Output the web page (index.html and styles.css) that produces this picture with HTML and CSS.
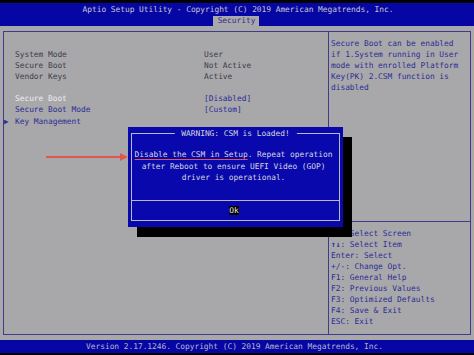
FILE: index.html
```html
<!DOCTYPE html>
<html>
<head>
<meta charset="utf-8">
<link rel="stylesheet" href="styles.css">
</head>
<body>
<div class="screen">
  <header class="top">
    <div class="title">Aptio Setup Utility - Copyright (C) 2019 American Megatrends, Inc.</div>
    <div class="tabs"><span class="tab">Security</span></div>
  </header>
  <main class="body">
    <div class="frame">
      <section class="left">
        <div class="row dim"><span class="mk"></span><span class="lbl">System Mode</span><span>User</span></div>
        <div class="row dim"><span class="mk"></span><span class="lbl">Secure Boot</span><span>Not Active</span></div>
        <div class="row dim"><span class="mk"></span><span class="lbl">Vendor Keys</span><span>Active</span></div>
        <div class="row blank"></div>
        <div class="row"><span class="mk"></span><span class="lbl sel">Secure Boot</span><span>[Disabled]</span></div>
        <div class="row"><span class="mk"></span><span class="lbl">Secure Boot Mode</span><span>[Custom]</span></div>
        <div class="row"><span class="mk">&#9654;</span><span class="lbl">Key Management</span><span></span></div>
      </section>
      <aside class="right">
        <div class="help">Secure Boot can be enabled<br>if 1.System running in User<br>mode with enrolled Platform<br>Key(PK) 2.CSM function is<br>disabled</div>
        <div class="keys">
          <div>&#8594;&#8592;: Select Screen</div>
          <div><b>&#8593;&#8595;</b>: Select Item</div>
          <div>Enter: Select</div>
          <div>+/-: Change Opt.</div>
          <div>F1: General Help</div>
          <div>F2: Previous Values</div>
          <div>F3: Optimized Defaults</div>
          <div>F4: Save &amp; Exit</div>
          <div>ESC: Exit</div>
        </div>
      </aside>
    </div>
  </main>
  <footer class="bottom">Version 2.17.1246. Copyright (C) 2019 American Megatrends, Inc.</footer>

  <div class="dialog">
    <div class="inner">
      <div class="dtitle">WARNING: CSM is Loaded!</div>
      <div class="msg"><span class="mark">Disable the CSM in Setup</span>. Repeat operation<br>after Reboot to ensure UEFI Video (GOP)<br>driver is operational.</div>
      <div class="actions"><span class="ok">Ok</span></div>
    </div>
  </div>

  <svg class="arrow" width="84" height="10" viewBox="0 0 84 10">
    <line x1="0" y1="5" x2="76" y2="5" stroke="#e2574c" stroke-width="2.2"/>
    <polygon points="74,1 82,5 74,9" fill="#e2574c"/>
  </svg>
</div>
</body>
</html>
```

FILE: styles.css
```css
html, body {
  margin: 0;
  padding: 0;
  background: #000;
}
.screen {
  position: relative;
  width: 474px;
  height: 355px;
  padding-top: 3px;
  box-sizing: border-box;
  display: flex;
  flex-direction: column;
  font-family: "DejaVu Sans Mono", "Liberation Mono", monospace;
  font-size: 7.9px;
  letter-spacing: -0.04px;
  overflow: hidden;
}
.top {
  height: 23px;
  background: #0606a4;
  padding-top: 1px;
  box-sizing: border-box;
  display: flex;
  flex-direction: column;
  align-items: center;
}
.title {
  height: 10px;
  line-height: 11px;
  color: #c6c6cc;
  padding-left: 2px;
}
.tabs {
  margin-top: 2px;
  display: flex;
  justify-content: center;
  width: 100%;
}
.tab {
  margin-left: -2px;
  height: 10px;
  line-height: 10px;
  padding: 0 4px 0 5px;
  background: #a9a9ab;
  color: #2e2e8e;
}
.body {
  height: 314px;
  background: #a8a8aa;
  padding: 5px 3px 5px 3px;
  box-sizing: border-box;
}
.frame {
  height: 304px;
  box-sizing: border-box;
  border: 1px solid #3c3c8a;
  display: grid;
  grid-template-columns: 325px 1fr;
}
.left {
  padding-top: 16.5px;
  border-right: 1px solid #3c3c8a;
}
.row {
  display: grid;
  grid-template-columns: 11px 189px auto;
  height: 11.2px;
  line-height: 11.2px;
  color: #2c2c96;
  white-space: pre;
}
.row.dim { color: #3c3c48; }
.mk {
  font-size: 7.5px;
  padding-left: 0;
}
.sel { color: #ececf2; }
.right {
  display: flex;
  flex-direction: column;
  color: #2c2c96;
}
.help {
  height: 190px;
  box-sizing: border-box;
  border-bottom: 1px solid #3c3c8a;
  padding: 6px 0 0 2px;
  line-height: 11px;
}
.keys {
  padding: 6px 0 0 2px;
  line-height: 11px;
}
.bottom {
  height: 13px;
  line-height: 13px;
  background: #0606a4;
  color: #b8b8c4;
  text-align: center;
  padding-right: 5px;
}
.dialog {
  position: absolute;
  left: 128px;
  top: 127px;
  width: 215px;
  height: 100px;
  box-sizing: border-box;
  background: #0808ac;
  padding: 6px 3px 6px 3px;
  box-shadow: 9px 10px 0 #000;
  color: #d6d6dc;
}
.inner {
  position: relative;
  height: 88px;
  box-sizing: border-box;
  border: 1px solid #b8b8d0;
  display: flex;
  flex-direction: column;
}
.dtitle {
  position: absolute;
  top: -6px;
  left: 50%;
  transform: translateX(-50%);
  background: #0808ac;
  padding: 0 7px;
  line-height: 11px;
  white-space: pre;
}
.msg {
  height: 67px;
  box-sizing: border-box;
  border-bottom: 1px solid #b8b8d0;
  padding-top: 15px;
  padding-right: 4px;
  text-align: center;
  line-height: 11.6px;
  white-space: nowrap;
}
.mark {
  text-decoration: underline;
  text-decoration-color: #e2574c;
  text-decoration-thickness: 1.3px;
  text-underline-offset: 2px;
}
.actions {
  flex: 1;
  display: flex;
  align-items: center;
  justify-content: center;
  padding-right: 3px;
}
.ok {
  background: #000;
  color: #e8e8e8;
  line-height: 9px;
  padding: 0 0.5px;
}
.arrow {
  position: absolute;
  left: 46px;
  top: 152px;
}
```
